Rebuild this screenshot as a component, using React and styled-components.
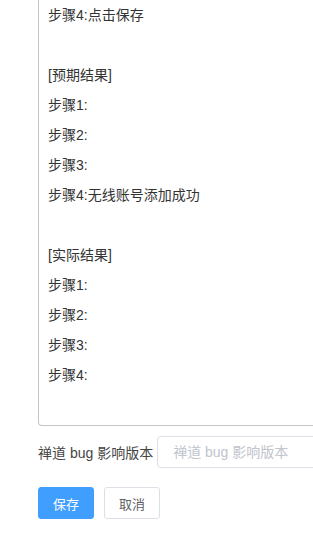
import React from "react";
import styled, { createGlobalStyle } from "styled-components";

const GlobalStyle = createGlobalStyle`
  html, body {
    margin: 0;
    padding: 0;
    background: #fff;
    overflow: hidden;
  }
  body {
    font-family: "Liberation Sans", Arial, "Noto Sans CJK SC", sans-serif;
    font-size: 14px;
    color: #606266;
  }
`;

const Page = styled.div`
  width: 313px;
  height: 560px;
  overflow: hidden;
  padding-left: 38px;
  box-sizing: border-box;
`;

const CaseBox = styled.div`
  width: 360px;
  height: 426px;
  box-sizing: border-box;
  border: 1px solid #c4c4c4;
  border-top: none;
  border-radius: 0 0 4px 4px;
  padding: 0 9px;
  line-height: 30px;
  color: #333;
`;

const Line = styled.div`
  height: 30px;
  white-space: nowrap;
`;

const FormRow = styled.div`
  display: flex;
  align-items: center;
  margin-top: 10px;
  height: 32px;
`;

const Label = styled.label`
  color: #444;
  font-size: 14px;
  padding-right: 4px;
  white-space: nowrap;
`;

const Input = styled.input`
  flex: none;
  width: 200px;
  height: 32px;
  box-sizing: border-box;
  border: 1px solid #dcdfe6;
  border-radius: 4px;
  padding: 0 15px;
  font-family: inherit;
  font-size: 14px;
  color: #606266;
  outline: none;
  &::placeholder {
    color: #c0c4cc;
  }
`;

const Actions = styled.div`
  display: flex;
  gap: 10px;
  margin-top: 19px;
`;

const Button = styled.button`
  width: 56px;
  height: 32px;
  box-sizing: border-box;
  border-radius: 3px;
  font-family: inherit;
  font-size: 13px;
  padding: 0;
  cursor: pointer;
  border: 1px solid ${(p) => (p.$primary ? "#409eff" : "#dcdfe6")};
  background: ${(p) => (p.$primary ? "#409eff" : "#fff")};
  color: ${(p) => (p.$primary ? "#fff" : "#606266")};
`;

const lines = [
  "步骤4:点击保存",
  "",
  "[预期结果]",
  "步骤1:",
  "步骤2:",
  "步骤3:",
  "步骤4:无线账号添加成功",
  "",
  "[实际结果]",
  "步骤1:",
  "步骤2:",
  "步骤3:",
  "步骤4:",
];

export default function App() {
  return (
    <Page>
      <GlobalStyle />
      <CaseBox>
        {lines.map((t, i) => (
          <Line key={i}>{t}</Line>
        ))}
      </CaseBox>
      <FormRow>
        <Label>禅道 bug 影响版本</Label>
        <Input placeholder="禅道 bug 影响版本" />
      </FormRow>
      <Actions>
        <Button $primary>保存</Button>
        <Button>取消</Button>
      </Actions>
    </Page>
  );
}
